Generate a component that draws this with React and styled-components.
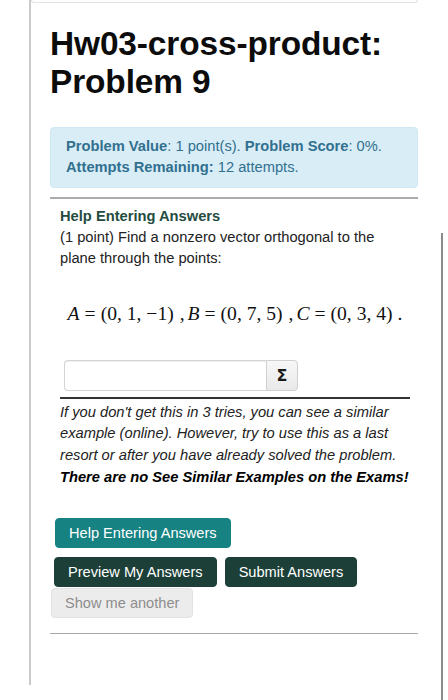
import React from "react";
import styled, { createGlobalStyle } from "styled-components";

const Global = createGlobalStyle`
  html, body { margin: 0; padding: 0; background: #fff; }
  body { font-family: "Liberation Sans", Arial, sans-serif; color: #222; }
`;

const Page = styled.div`
  position: relative;
  width: 448px;
  height: 700px;
  overflow: hidden;
  padding-left: 29px;
  box-sizing: border-box;
`;

const Frame = styled.div`
  border-left: 2px solid #c9c9c9;
  height: 685px;
  width: 400px;
  box-sizing: border-box;
`;

const TopCap = styled.div`
  width: 385px;
  height: 2px;
  border: 1px solid #e2e2e2;
  border-top: none;
  border-radius: 0 0 6px 6px;
`;

const Content = styled.div`
  padding-left: 19px;
  width: 368px;
`;

const Title = styled.h1`
  margin: 22px 0 0 0;
  font-size: 33.4px;
  line-height: 38px;
  font-weight: 700;
  color: #0c0c0c;
  letter-spacing: -0.1px;
`;

const InfoBox = styled.div`
  margin-top: 26px;
  background: #d9edf7;
  border: 1px solid #cfe8f3;
  border-radius: 4px;
  color: #31708f;
  font-size: 14.7px;
  line-height: 21px;
  padding: 8px 15px 9px;
`;

const Rule = styled.div`
  margin-top: ${(p) => p.$top}px;
  height: ${(p) => p.$h}px;
  background: ${(p) => p.$color};
`;

const Problem = styled.div`
  margin: 7px 0 0 10px;
  width: 350px;
  font-size: 14.7px;
  line-height: 21px;
  color: #222;
`;

const HelpHeading = styled.div`
  font-weight: 700;
  color: #234c3f;
`;

const MathLine = styled.div`
  margin: 33px 0 0;
  text-align: center;
  font-family: "Liberation Serif", "Times New Roman", serif;
  font-size: 19.6px;
  line-height: 24px;
  color: #111;
  white-space: nowrap;
`;

const V = styled.i`
  font-style: italic;
`;

const Op = styled.span`
  padding: 0 5px;
`;

const Sep = styled.span`
  padding: 0 3px 0 1px;
`;

const InputGroup = styled.div`
  display: flex;
  margin: 34px 0 0 4px;
  width: 234px;
  height: 31px;
`;

const AnswerInput = styled.div`
  flex: 1;
  border: 1px solid #d4d4d4;
  border-right: none;
  border-radius: 4px 0 0 4px;
  background: #fff;
  box-shadow: inset 0 1px 1px rgba(0, 0, 0, 0.06);
`;

const SigmaButton = styled.div`
  width: 30px;
  border: 1px solid #d0d0d0;
  border-radius: 0 4px 4px 0;
  background: linear-gradient(#f7f7f7, #e9e9e9);
  display: flex;
  align-items: center;
  justify-content: center;
  font-family: "DejaVu Sans", sans-serif;
  font-weight: 700;
  font-size: 16px;
  color: #1a1a1a;
`;

const BottomRule = styled.div`
  margin-top: 6px;
  height: 1.5px;
  background: #333;
`;

const Note = styled.p`
  margin: 3px 0 0;
  font-style: italic;
  font-size: 14.7px;
  line-height: 21.8px;
  color: #222;
`;

const Strong = styled.b`
  color: #000;
`;

const Buttons = styled.div`
  margin-top: 29px;
  display: flex;
  flex-direction: column;
  align-items: flex-start;
`;

const Row = styled.div`
  display: flex;
  gap: 8px;
  margin: ${(p) => p.$m || "0"};
`;

const Btn = styled.div`
  height: 30px;
  box-sizing: border-box;
  padding: 0 13px;
  display: flex;
  align-items: center;
  font-size: 14.6px;
  border-radius: 4px;
  background: ${(p) => p.$bg};
  color: ${(p) => p.$fg || "#fff"};
  border: 1px solid ${(p) => p.$border || p.$bg};
`;

const Scrollbar = styled.div`
  position: absolute;
  left: 441px;
  top: 233px;
  width: 2px;
  height: 480px;
  background: #8a8a8a;
`;

export default function App() {
  return (
    <>
      <Global />
      <Page>
        <Frame>
          <TopCap />
          <Content>
            <Title>
              Hw03-cross-product:
              <br />
              Problem 9
            </Title>
            <InfoBox>
              <b>Problem Value</b>: 1 point(s). <b>Problem Score</b>: 0%.
              <br />
              <b>Attempts Remaining:</b> 12 attempts.
            </InfoBox>
            <Rule $top={9} $h={2} $color="#acacac" />
            <Problem>
              <HelpHeading>Help Entering Answers</HelpHeading>
              (1 point) Find a nonzero vector orthogonal to the plane through
              the points:
              <MathLine>
                <V>A</V>
                <Op>=</Op>(0, 1, −1)<Sep> ,</Sep>
                <V>B</V>
                <Op>=</Op>(0, 7, 5)<Sep> ,</Sep>
                <V>C</V>
                <Op>=</Op>(0, 3, 4) .
              </MathLine>
              <InputGroup>
                <AnswerInput />
                <SigmaButton>Σ</SigmaButton>
              </InputGroup>
              <BottomRule />
              <Note>
                If you don't get this in 3 tries, you can see a similar example
                (online). However, try to use this as a last resort or after you
                have already solved the problem.{" "}
                <Strong>There are no See Similar Examples on the Exams!</Strong>
              </Note>
            </Problem>
            <Buttons>
              <Row $m="0 0 0 5px">
                <Btn $bg="#168282">Help Entering Answers</Btn>
              </Row>
              <Row $m="9px 0 0 4px">
                <Btn $bg="#1c3f37">Preview My Answers</Btn>
                <Btn $bg="#1c3f37">Submit Answers</Btn>
              </Row>
              <Row $m="1px 0 0 1px">
                <Btn $bg="#ececec" $fg="#8c8c8c" $border="#e2e2e2">
                  Show me another
                </Btn>
              </Row>
            </Buttons>
            <Rule $top={15} $h={1} $color="#a8a8a8" />
          </Content>
        </Frame>
        <Scrollbar />
      </Page>
    </>
  );
}
